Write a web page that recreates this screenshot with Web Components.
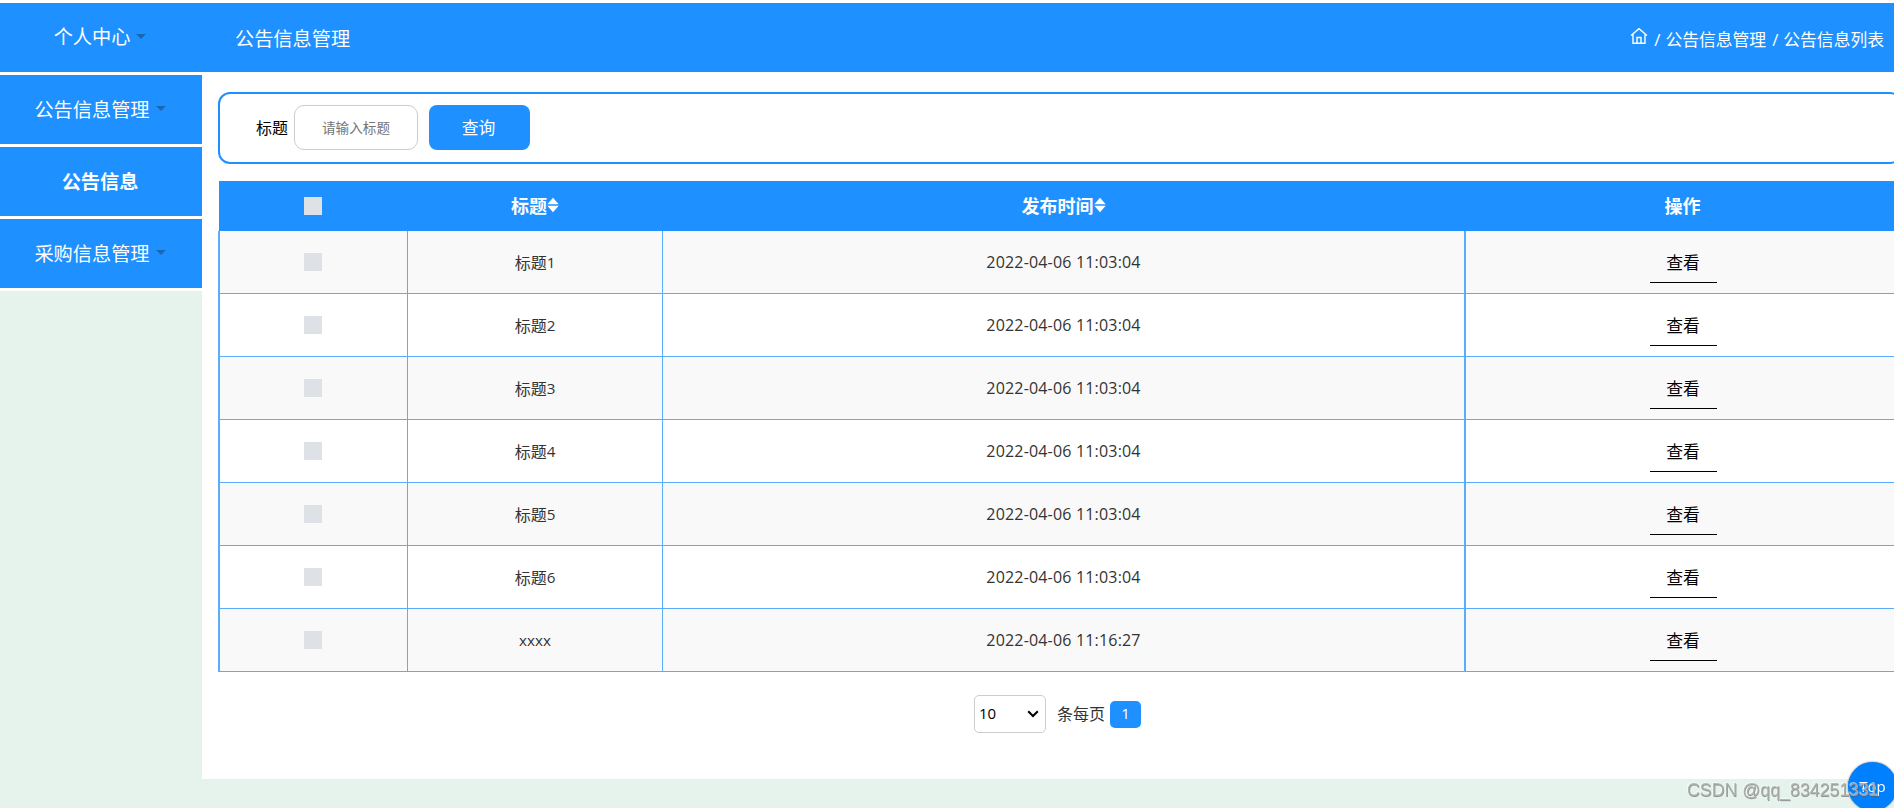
<!DOCTYPE html>
<html lang="zh">
<head>
<meta charset="utf-8">
<title>公告信息管理</title>
<style>
    html, body {
        margin: 0;
        height: 100%;
        overflow: hidden;
    }
    body {
        background-color: #E6F3EC;
        font-family: "Open Sans", "Noto Sans CJK SC", sans-serif;
        font-size: 16px;
        color: #333;
        --main: #1E90FF;
        --line: #5BADFB;
    }
</style>
</head>
<body>
<admin-page>
    <top-bar slot="header" user="个人中心" heading="公告信息管理">
        <span slot="crumb">公告信息管理</span>
        <span slot="crumb">公告信息列表</span>
    </top-bar>
    <side-item slot="menu" caret>公告信息管理</side-item>
    <side-item slot="menu" selected>公告信息</side-item>
    <side-item slot="menu" caret>采购信息管理</side-item>
    <search-box label="标题" placeholder="请输入标题">查询</search-box>
    <notice-table></notice-table>
    <page-nav size="10" page="1">条每页</page-nav>
</admin-page>
<back-top>Top</back-top>
<water-mark>CSDN @qq_834251331</water-mark>

<script>
(function() {
    "use strict";

    function attach(element, html) {
        const root = element.attachShadow({mode: 'open'});
        root.innerHTML = html;
        return root;
    }

    class AdminPage extends HTMLElement {
        constructor() {
            super();
            attach(this, `
                <style>
                    :host {
                        display: block;
                        width: 1902px;
                    }
                    #body {
                        display: flex;
                        align-items: flex-start;
                    }
                    nav {
                        width: 202px;
                        flex: none;
                    }
                    main {
                        flex: 1;
                        box-sizing: border-box;
                        height: 704px;
                        padding: 17px 0 0 16px;
                        background-color: #FFF;
                    }
                </style>
                <slot name="header"></slot>
                <div id="body">
                    <nav><slot name="menu"></slot></nav>
                    <main><slot></slot></main>
                </div>
            `);
        }
    }

    class TopBar extends HTMLElement {
        constructor() {
            super();
            attach(this, `
                <style>
                    :host {
                        display: flex;
                        align-items: center;
                        box-sizing: border-box;
                        height: 75px;
                        border: solid #FFF;
                        border-width: 3px 0;
                        background-color: var(--main);
                        color: #FFF;
                        font-size: 19.2px;
                        line-height: 28px;
                    }
                    #user {
                        display: flex;
                        align-items: center;
                        justify-content: center;
                        box-sizing: border-box;
                        width: 202px;
                        padding: 0 2px 1px 0;
                    }
                    #user::after {
                        content: "";
                        margin: 0 0 2px 6px;
                        border: 5px solid transparent;
                        border-top-color: #1767B5;
                        border-bottom: 0;
                    }
                    #heading {
                        padding-left: 33px;
                        padding-top: 3px;
                        flex: 1;
                    }
                    #crumbs {
                        display: flex;
                        align-items: center;
                        font-size: 16.8px;
                        padding: 4px 18px 0 0;
                    }
                    svg {
                        margin-bottom: 7px;
                    }
                    ::slotted(span)::before {
                        content: "/";
                        margin: 0 5px 0 6px;
                    }
                </style>
                <div id="user"></div>
                <div id="heading"></div>
                <div id="crumbs">
                    <svg width="18" height="18" viewBox="0 0 18 18" fill="none" stroke="#FFF" stroke-width="1.4">
                        <path d="M1 8.500 9 1.700l8 6.800M3 7v9.300h12V7M7 16v-5.500h4V16"/>
                    </svg>
                    <slot name="crumb"></slot>
                </div>
            `);
        }

        connectedCallback() {
            this.shadowRoot.querySelector('#user').textContent = this.getAttribute('user');
            this.shadowRoot.querySelector('#heading').textContent = this.getAttribute('heading');
        }
    }

    class SideItem extends HTMLElement {
        constructor() {
            super();
            attach(this, `
                <style>
                    :host {
                        display: flex;
                        align-items: center;
                        justify-content: center;
                        box-sizing: border-box;
                        height: 72px;
                        padding: 1px 2px 0 0;
                        border-bottom: 3px solid #FFF;
                        background-color: var(--main);
                        color: #FFF;
                        font-size: 19.2px;
                        line-height: 28px;
                        cursor: pointer;
                    }
                    :host([selected]) {
                        font-weight: bold;
                    }
                    :host([caret])::after {
                        content: "";
                        margin: 0 0 4px 6px;
                        border: 5px solid transparent;
                        border-top-color: #1767B5;
                        border-bottom: 0;
                    }
                </style>
                <slot></slot>
            `);
        }
    }

    class SearchBox extends HTMLElement {
        constructor() {
            super();
            attach(this, `
                <style>
                    :host {
                        display: flex;
                        align-items: center;
                        box-sizing: border-box;
                        height: 72px;
                        padding: 0 36px 1px;
                        border: 2px solid var(--main);
                        border-radius: 12px;
                        color: #000;
                    }
                    label {
                        margin-bottom: 2px;
                    }
                    input {
                        box-sizing: border-box;
                        width: 124px;
                        height: 45px;
                        margin: 0 11px 0 6px;
                        padding: 0 27px 2px;
                        border: 1px solid #CCC;
                        border-radius: 10px;
                        font: 13.6px "Noto Sans CJK SC", sans-serif;
                    }
                    input::placeholder {
                        color: #757575;
                    }
                    button {
                        width: 101px;
                        height: 45px;
                        padding: 0 2px 2px 0;
                        border: none;
                        border-radius: 8px;
                        background-color: var(--main);
                        color: #FFF;
                        font: 16.8px "Noto Sans CJK SC", sans-serif;
                    }
                </style>
                <label></label>
                <input type="text">
                <button><slot></slot></button>
            `);
        }

        connectedCallback() {
            this.shadowRoot.querySelector('label').textContent = this.getAttribute('label');
            this.shadowRoot.querySelector('input').placeholder = this.getAttribute('placeholder');
        }
    }

    class SortHead extends HTMLElement {
        constructor() {
            super();
            attach(this, `
                <style>
                    :host {
                        display: inline-flex;
                        align-items: center;
                        padding-left: 2px;
                    }
                </style>
                <slot></slot>
                <svg width="12" height="16" viewBox="0 0 12 16" fill="#FFF">
                    <path d="M0.300 7.300 6 0.800 11.700 7.300zM0.300 8.700h11.400L6 15.200z"/>
                </svg>
            `);
        }
    }

    const notices = [
        ['标题', '1', '2022-04-06 11:03:04'],
        ['标题', '2', '2022-04-06 11:03:04'],
        ['标题', '3', '2022-04-06 11:03:04'],
        ['标题', '4', '2022-04-06 11:03:04'],
        ['标题', '5', '2022-04-06 11:03:04'],
        ['标题', '6', '2022-04-06 11:03:04'],
        ['', 'xxxx', '2022-04-06 11:16:27']
    ];

    class NoticeTable extends HTMLElement {
        constructor() {
            super();
            attach(this, `
                <style>
                    :host {
                        display: block;
                        margin-top: 17px;
                    }
                    .row {
                        display: grid;
                        grid-template-columns: 188px 255px 803px 1fr;
                        box-sizing: border-box;
                        height: 63px;
                        border-left: 2px solid var(--line);
                        border-bottom: 1px solid var(--line);
                        background-color: #FFF;
                    }
                    .row.odd {
                        background-color: #F9F9F9;
                    }
                    .row > div {
                        display: flex;
                        align-items: center;
                        justify-content: center;
                        padding-bottom: 1px;
                        border-right: 1px solid var(--line);
                    }
                    .row > div:first-child {
                        padding: 0 2px 0 0;
                    }
                    .row > div:nth-child(3) {
                        border-right-width: 2px;
                    }
                    .row > div:last-child {
                        padding-right: 2px;
                        border: none;
                    }
                    .row.head {
                        height: 50px;
                        margin-left: 1px;
                        border: none;
                        background-color: var(--main);
                        color: #FFF;
                        font-size: 18px;
                        font-weight: bold;
                    }
                    .row.head > div {
                        border-color: transparent;
                        padding-bottom: 2px;
                    }
                    .row.head > div:first-child {
                        padding: 0;
                    }
                    i {
                        width: 18px;
                        height: 18px;
                        background-color: #DEE2E6;
                    }
                    .num {
                        font-size: 15.2px;
                    }
                    time {
                        font-size: 16px;
                        letter-spacing: .18px;
                    }
                    a {
                        box-sizing: border-box;
                        width: 67px;
                        height: 38px;
                        margin-top: 4px;
                        border-bottom: 1px solid #000;
                        color: #000;
                        font-size: 16.8px;
                        line-height: 35px;
                        text-align: center;
                    }
                </style>
                <div class="row head">
                    <div><i></i></div>
                    <div><sort-head>标题</sort-head></div>
                    <div><sort-head>发布时间</sort-head></div>
                    <div>操作</div>
                </div>
                ${notices.map(([title, num, time], i) => `
                    <div class="row ${i % 2 ? '' : 'odd'}">
                        <div><i></i></div>
                        <div>${title}<span class="num">${num}</span></div>
                        <div><time>${time}</time></div>
                        <div><a>查看</a></div>
                    </div>
                `).join('')}
            `);
        }
    }

    class PageNav extends HTMLElement {
        constructor() {
            super();
            attach(this, `
                <style>
                    :host {
                        display: flex;
                        align-items: center;
                        justify-content: center;
                        margin-top: 23px;
                        padding-right: 5px;
                    }
                    #size {
                        display: flex;
                        align-items: center;
                        justify-content: space-between;
                        box-sizing: border-box;
                        width: 72px;
                        height: 38px;
                        margin-right: 11px;
                        padding: 0 6px 0 4px;
                        border: 1px solid #CCC;
                        border-radius: 5px;
                        color: #000;
                    }
                    #size span {
                        font-size: 15px;
                        margin-bottom: 2px;
                    }
                    #text {
                        margin-bottom: 2px;
                    }
                    #page {
                        width: 31px;
                        height: 27px;
                        margin-left: 5px;
                        border-radius: 5px;
                        background-color: var(--main);
                        color: #FFF;
                        font-size: 15px;
                        line-height: 25px;
                        text-align: center;
                    }
                </style>
                <div id="size">
                    <span></span>
                    <svg width="12" height="8" viewBox="0 0 12 8" fill="none" stroke="#000" stroke-width="2">
                        <path d="M1.200 1.200 6 6l4.800-4.800"/>
                    </svg>
                </div>
                <div id="text"><slot></slot></div>
                <div id="page"></div>
            `);
        }

        connectedCallback() {
            this.shadowRoot.querySelector('#size span').textContent = this.getAttribute('size');
            this.shadowRoot.querySelector('#page').textContent = this.getAttribute('page');
        }
    }

    class BackTop extends HTMLElement {
        constructor() {
            super();
            attach(this, `
                <style>
                    :host {
                        position: fixed;
                        right: -3px;
                        bottom: -3px;
                        width: 49px;
                        height: 49px;
                        border-radius: 50%;
                        background-color: #0080FF;
                        box-shadow: 0 0 2px #666;
                        color: #FFF;
                        font-size: 15px;
                        line-height: 48px;
                        text-align: center;
                    }
                </style>
                <slot></slot>
            `);
        }
    }

    class WaterMark extends HTMLElement {
        constructor() {
            super();
            attach(this, `
                <style>
                    :host {
                        position: fixed;
                        right: 15px;
                        bottom: 7px;
                        color: rgba(170, 175, 172, .85);
                        font: 17.8px/22px "Liberation Sans", sans-serif;
                        text-shadow: .5px .5px 0 rgba(90, 90, 90, .6), -1px -1px 0 rgba(255, 255, 255, .5);
                        white-space: nowrap;
                    }
                </style>
                <slot></slot>
            `);
        }
    }

    window.customElements.define('admin-page', AdminPage);
    window.customElements.define('top-bar', TopBar);
    window.customElements.define('side-item', SideItem);
    window.customElements.define('search-box', SearchBox);
    window.customElements.define('sort-head', SortHead);
    window.customElements.define('notice-table', NoticeTable);
    window.customElements.define('page-nav', PageNav);
    window.customElements.define('back-top', BackTop);
    window.customElements.define('water-mark', WaterMark);
})();
</script>
</body>
</html>
